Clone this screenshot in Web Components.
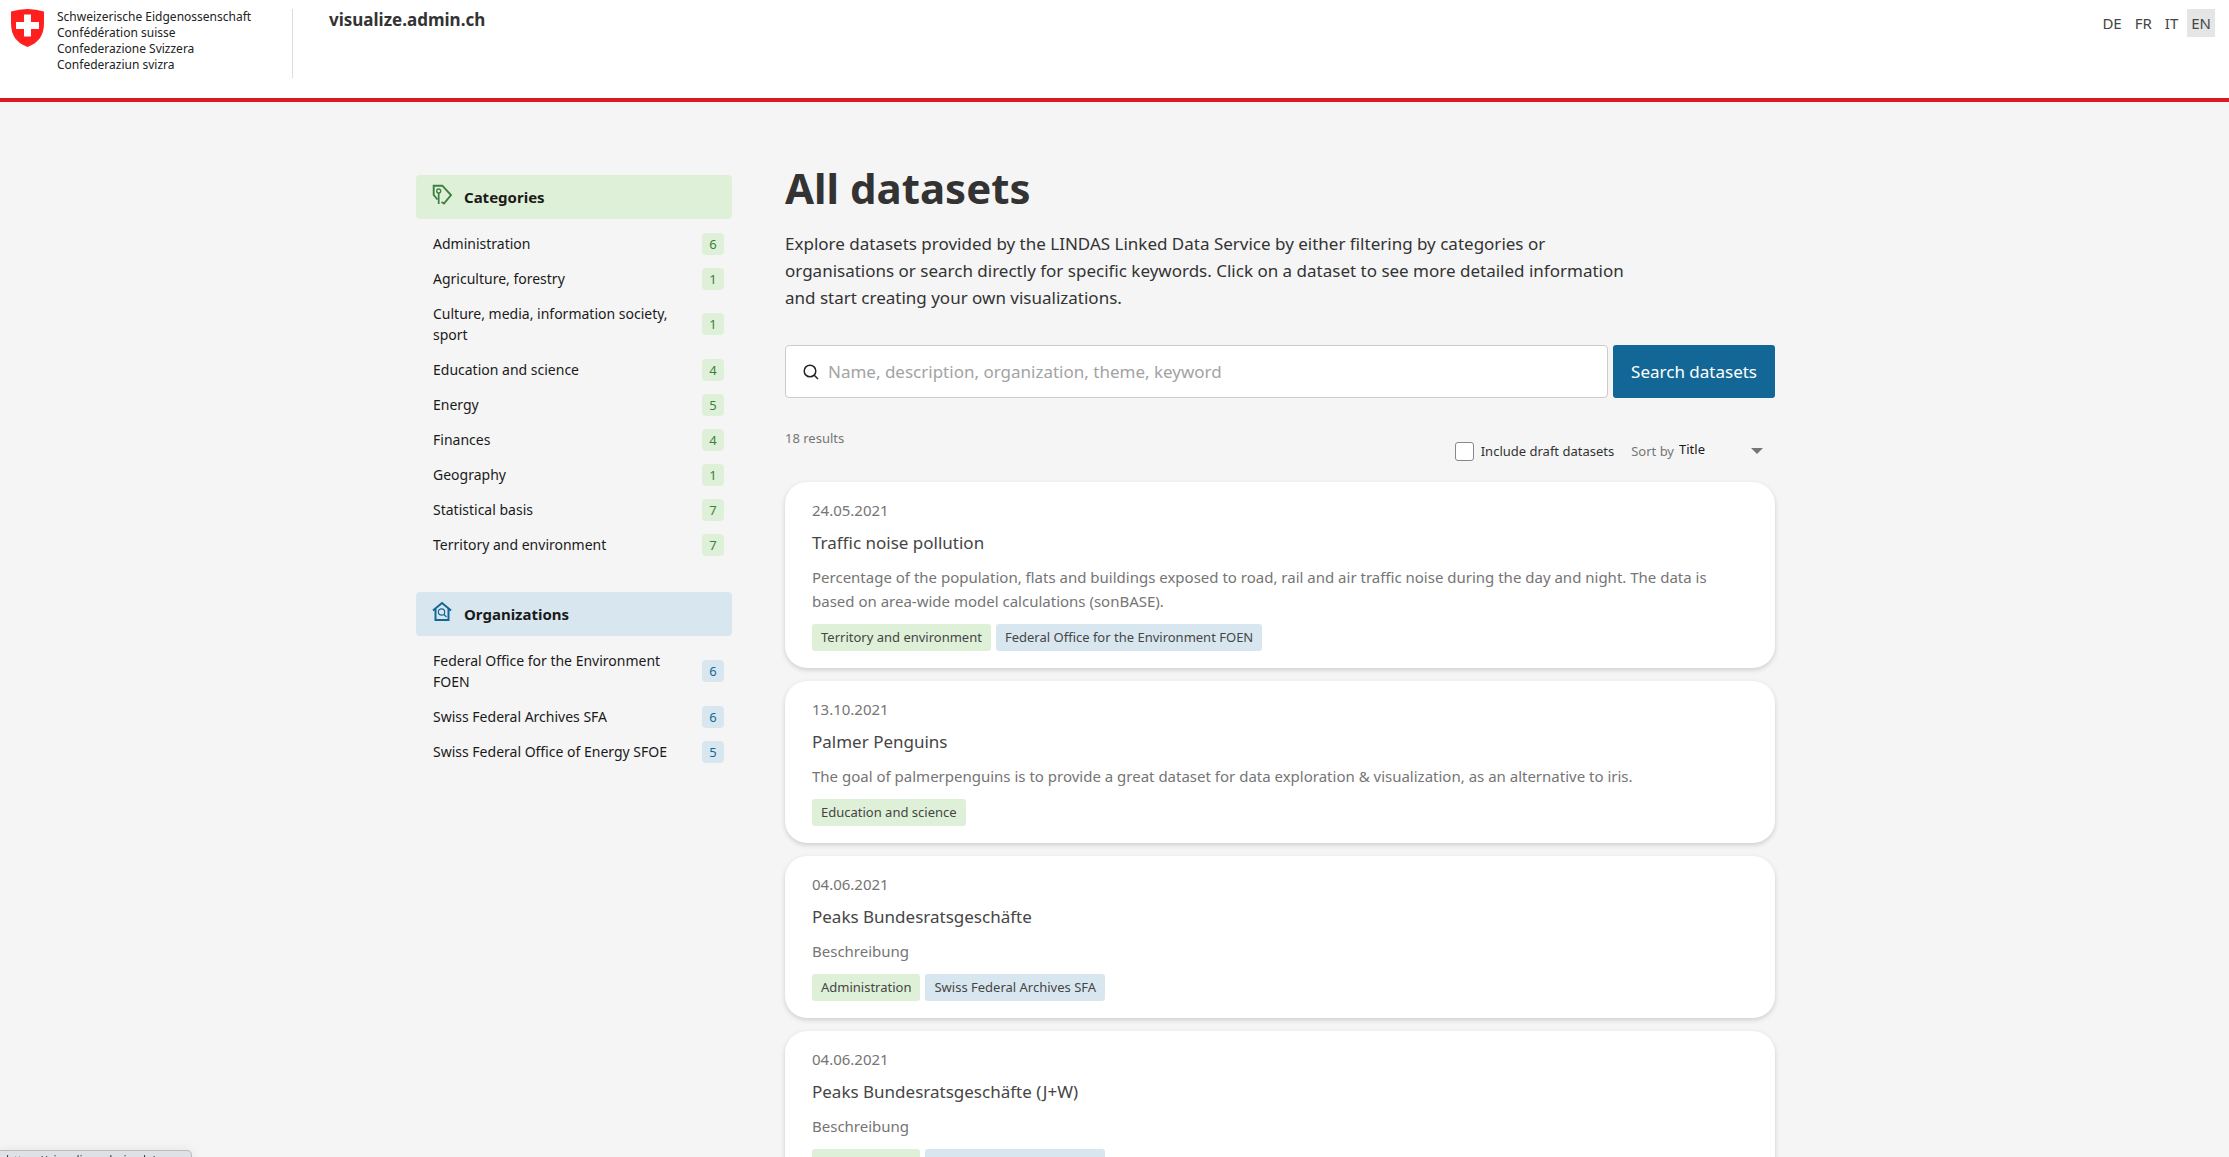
<!DOCTYPE html>
<html lang="en">
<head>
<meta charset="utf-8">
<title>visualize.admin.ch</title>
<style>
  body {
    margin: 0;
    background: #f5f5f5;
    color: #333;
    font-family: "Noto Sans", "Open Sans", sans-serif;
  }
</style>
</head>
<body>
<dataset-browser></dataset-browser>

<script>
class SiteHeader extends HTMLElement {
  constructor() {
    super();
    this.attachShadow({ mode: 'open' });
    this.shadowRoot.innerHTML = `
      <style>
        :host {
          display: flex;
          align-items: flex-start;
          box-sizing: border-box;
          min-height: 102px;
          padding: 9px 14px 20px 11px;
          background: white;
          border-bottom: 4px solid #dc1820;
        }
        .logo {
          display: flex;
          gap: 13px;
          box-sizing: border-box;
          width: 282px;
          height: 69px;
          border-right: 1px solid #ddd;
          font-size: 12px;
          line-height: 16px;
          color: #222;
          text-decoration: none;
        }
        .logo svg {
          width: 33px;
          height: 38px;
        }
        .title {
          flex: 1;
          margin-left: 36px;
          font-size: 17px;
          line-height: 22px;
          font-weight: 700;
          color: #333;
          text-decoration: none;
        }
        nav {
          display: flex;
          gap: 5px;
        }
        nav a {
          padding: 0 4px;
          font-size: 15px;
          line-height: 28px;
          color: #454545;
          text-decoration: none;
        }
        nav a[aria-current] {
          background: #e5e5e5;
        }
      </style>
      <a class="logo" href="#">
        <svg viewBox="0 0 33 38" aria-hidden="true">
          <path fill="#ff1f1f" d="M0 2.600Q8 0 16.500 0T33 2.600V14C33 27 27 34 16.500 38C6 34 0 27 0 14Z"/>
          <path fill="#fff" d="M13 5.500h7v7.500h8v7h-8v7.500h-7v-7.500h-8v-7h8z"/>
        </svg>
        <span>Schweizerische Eidgenossenschaft<br>Confédération suisse<br>Confederazione Svizzera<br>Confederaziun svizra</span>
      </a>
      <a class="title" href="#">visualize.admin.ch</a>
      <nav aria-label="Language">
        <a href="#de">DE</a><a href="#fr">FR</a><a href="#it">IT</a><a href="#en" aria-current="true">EN</a>
      </nav>
    `;
  }
}

class FilterGroup extends HTMLElement {
  constructor() {
    super();
    this.attachShadow({ mode: 'open' });
    this.shadowRoot.innerHTML = `
      <style>
        :host {
          display: block;
        }
        h2 {
          display: flex;
          align-items: center;
          gap: 11px;
          margin: 0 0 7px;
          padding: 0 16px;
          border-radius: 4px;
          background: var(--tint);
          color: #1a1a1a;
          font-size: 15px;
          line-height: 44px;
          font-weight: 700;
        }
        ::slotted(svg) {
          width: 21px;
          height: 21px;
          margin-bottom: 6px;
          color: var(--accent);
        }
      </style>
      <h2><slot name="icon"></slot><span></span></h2>
      <slot></slot>
    `;
  }

  connectedCallback() {
    this.shadowRoot.querySelector('span').textContent = this.getAttribute('heading');
  }
}

class FilterItem extends HTMLElement {
  constructor() {
    super();
    this.attachShadow({ mode: 'open' });
    this.shadowRoot.innerHTML = `
      <style>
        :host {
          display: block;
        }
        a {
          display: flex;
          align-items: center;
          justify-content: space-between;
          gap: 24px;
          padding: 7px 8px 7px 17px;
          color: #1a1a1a;
          font-size: 14px;
          line-height: 21px;
          text-decoration: none;
        }
        .count {
          flex: none;
          width: 22px;
          margin: -1px 0;
          border-radius: 4px;
          background: var(--tint);
          color: var(--accent);
          font-size: 13px;
          line-height: 22px;
          text-align: center;
        }
      </style>
      <a href="#"><span><slot></slot></span><span class="count"></span></a>
    `;
  }

  connectedCallback() {
    this.shadowRoot.querySelector('.count').textContent = this.getAttribute('count');
  }
}

class DatasetSearch extends HTMLElement {
  constructor() {
    super();
    this.attachShadow({ mode: 'open' });
    this.shadowRoot.innerHTML = `
      <style>
        :host {
          display: block;
        }
        form {
          display: flex;
          gap: 5px;
        }
        label {
          flex: 1;
          display: flex;
          align-items: center;
          gap: 9px;
          box-sizing: border-box;
          height: 53px;
          padding: 0 17px;
          border: 1px solid #ccc;
          border-radius: 4px;
          background: white;
        }
        svg {
          flex: none;
          width: 16px;
          height: 16px;
        }
        input {
          flex: 1;
          min-width: 0;
          padding: 0;
          border: 0;
          outline: 0;
          background: none;
          color: #333;
          font: inherit;
          font-size: 17px;
        }
        input::placeholder {
          color: #a3a3a3;
          opacity: 1;
        }
        button {
          padding: 0 18px;
          border: 0;
          border-radius: 3px;
          background: #136797;
          color: white;
          font: inherit;
          font-size: 17px;
          cursor: pointer;
        }
      </style>
      <form>
        <label for="query">
          <svg viewBox="0 0 16 16" fill="none" stroke="#222" stroke-width="1.500" aria-hidden="true">
            <circle cx="7" cy="7" r="5.800"/><path d="M11 11l4 4"/>
          </svg>
          <input id="query" type="text" aria-label="Search" placeholder="Name, description, organization, theme, keyword">
        </label>
        <button type="button">Search datasets</button>
      </form>
    `;
  }
}

class ResultControls extends HTMLElement {
  constructor() {
    super();
    this.attachShadow({ mode: 'open' });
    this.shadowRoot.innerHTML = `
      <style>
        :host {
          display: flex;
          align-items: flex-start;
          justify-content: space-between;
          color: #757575;
          font-size: 13px;
          line-height: 20px;
        }
        .controls {
          display: flex;
          align-items: center;
          gap: 17px;
          padding-top: 11px;
        }
        .draft, .sort {
          display: flex;
          align-items: center;
        }
        .draft {
          gap: 7px;
          color: #333;
        }
        .sort {
          gap: 5px;
        }
        input {
          appearance: none;
          box-sizing: border-box;
          width: 19px;
          height: 19px;
          margin: 0;
          border: 1px solid #888;
          border-radius: 3px;
          background: white;
        }
        .picker {
          display: flex;
          align-items: center;
        }
        select {
          appearance: none;
          width: 96px;
          height: 24px;
          margin-right: -24px;
          padding: 0 24px 4px 0;
          border: 0;
          background: none;
          color: #1a1a1a;
          font: inherit;
        }
        svg {
          width: 12px;
          height: 6px;
          margin-right: 12px;
          pointer-events: none;
        }
      </style>
      <slot></slot>
      <div class="controls">
        <label class="draft" for="draft"><input id="draft" type="checkbox">Include draft datasets</label>
        <div class="sort">
          <label for="order">Sort by</label>
          <span class="picker">
            <select id="order"><option>Title</option></select>
            <svg viewBox="0 0 12 6" aria-hidden="true"><path fill="#757575" d="M0 0h12L6 6z"/></svg>
          </span>
        </div>
      </div>
    `;
  }
}

class DatasetCard extends HTMLElement {
  constructor() {
    super();
    this.attachShadow({ mode: 'open' });
    this.shadowRoot.innerHTML = `
      <style>
        :host {
          display: block;
          padding: 17px 27px;
          border-radius: 22px;
          background: white;
          box-shadow: 0 2px 5px rgba(0, 0, 0, 0.16);
          color: #757575;
          font-size: 15px;
        }
        time {
          display: block;
          line-height: 22px;
        }
        h3 {
          margin: 9px 0;
          color: #454545;
          font-size: 17px;
          line-height: 26px;
          font-weight: 400;
        }
        p {
          margin: 0 0 11px;
          line-height: 24px;
        }
        .tags {
          display: flex;
          gap: 5px;
        }
      </style>
      <time></time>
      <h3></h3>
      <p><slot></slot></p>
      <div class="tags"><slot name="tag"></slot></div>
    `;
  }

  connectedCallback() {
    this.shadowRoot.querySelector('time').textContent = this.getAttribute('date');
    this.shadowRoot.querySelector('h3').textContent = this.getAttribute('heading');
  }
}

class DatasetTag extends HTMLElement {
  constructor() {
    super();
    this.attachShadow({ mode: 'open' });
    this.shadowRoot.innerHTML = `
      <style>
        :host {
          display: block;
          --tint: #dff0d8;
        }
        :host([kind="organization"]) {
          --tint: #d8e7ef;
        }
        a {
          display: block;
          padding: 0 9px;
          border-radius: 3px;
          background: var(--tint);
          color: #454545;
          font-size: 13px;
          line-height: 27px;
          text-decoration: none;
        }
      </style>
      <a href="#"><slot></slot></a>
    `;
  }
}

class LinkStatus extends HTMLElement {
  constructor() {
    super();
    this.attachShadow({ mode: 'open' });
    this.shadowRoot.innerHTML = `
      <style>
        :host {
          position: fixed;
          left: 0;
          bottom: -16px;
          box-sizing: border-box;
          width: 192px;
          height: 23px;
          padding: 0 6px;
          overflow: hidden;
          border: 1px solid #bbb;
          border-left: 0;
          border-radius: 0 5px 0 0;
          background: #dee1e6;
          box-shadow: 0 0 12px rgba(0, 0, 0, 0.08);
          color: #444;
          font-size: 12px;
          line-height: 20px;
          white-space: nowrap;
        }
      </style>
      <slot></slot>
    `;
  }
}

class DatasetBrowser extends HTMLElement {
  constructor() {
    super();
    this.attachShadow({ mode: 'open' });
    this.shadowRoot.innerHTML = `
      <style>
        :host {
          display: block;
        }
        .page {
          display: grid;
          grid-template-columns: 316px minmax(0, 1fr);
          gap: 53px;
          box-sizing: border-box;
          max-width: 1397px;
          margin: 0 auto;
          padding: 58px 38px 60px 0;
        }
        aside {
          display: flex;
          flex-direction: column;
          gap: 30px;
          padding-top: 15px;
        }
        .categories {
          --tint: #dff0d8;
          --accent: #3c7f42;
        }
        .organizations {
          --tint: #d8e7ef;
          --accent: #136797;
        }
        h1 {
          margin: 0;
          font-size: 42px;
          line-height: 56px;
          font-weight: 700;
        }
        .intro {
          max-width: 864px;
          margin: 14px 0 34px;
          font-size: 17px;
          line-height: 27px;
        }
        result-controls {
          margin: 30px 0 19px;
        }
        .results {
          display: flex;
          flex-direction: column;
          gap: 13px;
        }
      </style>
      <site-header></site-header>
      <div class="page">
        <aside>
          <filter-group class="categories" heading="Categories">
            <svg slot="icon" viewBox="0 0 21 21" fill="none" stroke="currentColor" stroke-width="1.900" aria-hidden="true">
              <path d="M5.500 15.500L1.700 11V1.700H10.300L19 11L12 19.500L9.500 18"/>
              <circle cx="6.700" cy="7" r="2" stroke-width="1.300"/>
              <path d="M6.700 9V20" stroke-width="1.700"/>
            </svg>
            <filter-item count="6">Administration</filter-item>
            <filter-item count="1">Agriculture, forestry</filter-item>
            <filter-item count="1">Culture, media, information society, sport</filter-item>
            <filter-item count="4">Education and science</filter-item>
            <filter-item count="5">Energy</filter-item>
            <filter-item count="4">Finances</filter-item>
            <filter-item count="1">Geography</filter-item>
            <filter-item count="7">Statistical basis</filter-item>
            <filter-item count="7">Territory and environment</filter-item>
          </filter-group>
          <filter-group class="organizations" heading="Organizations">
            <svg slot="icon" viewBox="0 0 21 21" fill="none" stroke="currentColor" stroke-width="2" aria-hidden="true">
              <path d="M1 9.500L10 2L19 9.500M3.500 8V19H16.500V8"/>
              <circle cx="9.500" cy="11" r="3.200" stroke-width="1.200"/>
              <path d="M12 13.500L14.500 16" stroke-width="1.200"/>
            </svg>
            <filter-item count="6">Federal Office for the Environment FOEN</filter-item>
            <filter-item count="6">Swiss Federal Archives SFA</filter-item>
            <filter-item count="5">Swiss Federal Office of Energy SFOE</filter-item>
          </filter-group>
        </aside>
        <main>
          <h1>All datasets</h1>
          <p class="intro">Explore datasets provided by the LINDAS Linked Data Service by either filtering by categories or organisations or search directly for specific keywords. Click on a dataset to see more detailed information and start creating your own visualizations.</p>
          <dataset-search></dataset-search>
          <result-controls>18 results</result-controls>
          <div class="results">
            <dataset-card date="24.05.2021" heading="Traffic noise pollution">
              Percentage of the population, flats and buildings exposed to road, rail and air traffic noise during the day and night. The data is based on area-wide model calculations (sonBASE).
              <dataset-tag slot="tag">Territory and environment</dataset-tag>
              <dataset-tag slot="tag" kind="organization">Federal Office for the Environment FOEN</dataset-tag>
            </dataset-card>
            <dataset-card date="13.10.2021" heading="Palmer Penguins">
              The goal of palmerpenguins is to provide a great dataset for data exploration &amp; visualization, as an alternative to iris.
              <dataset-tag slot="tag">Education and science</dataset-tag>
            </dataset-card>
            <dataset-card date="04.06.2021" heading="Peaks Bundesratsgeschäfte">
              Beschreibung
              <dataset-tag slot="tag">Administration</dataset-tag>
              <dataset-tag slot="tag" kind="organization">Swiss Federal Archives SFA</dataset-tag>
            </dataset-card>
            <dataset-card date="04.06.2021" heading="Peaks Bundesratsgeschäfte (J+W)">
              Beschreibung
              <dataset-tag slot="tag">Administration</dataset-tag>
              <dataset-tag slot="tag" kind="organization">Swiss Federal Archives SFA</dataset-tag>
            </dataset-card>
          </div>
        </main>
      </div>
      <link-status>https://visualize.admin.ch/en</link-status>
    `;
  }
}

customElements.define('site-header', SiteHeader);
customElements.define('filter-group', FilterGroup);
customElements.define('filter-item', FilterItem);
customElements.define('dataset-search', DatasetSearch);
customElements.define('result-controls', ResultControls);
customElements.define('dataset-card', DatasetCard);
customElements.define('dataset-tag', DatasetTag);
customElements.define('link-status', LinkStatus);
customElements.define('dataset-browser', DatasetBrowser);
</script>
</body>
</html>
